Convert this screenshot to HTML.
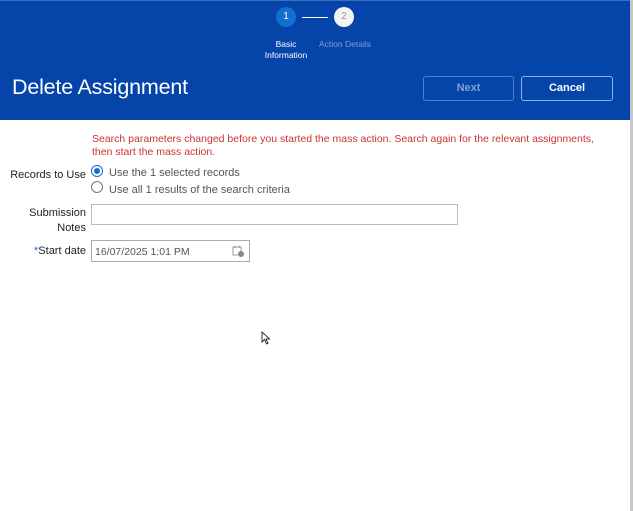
<!DOCTYPE html>
<html><head><style>
*{margin:0;padding:0;box-sizing:border-box}
body{width:633px;height:511px;background:#fff;font-family:"Liberation Sans",sans-serif;position:relative;overflow:hidden}
.hdr{position:absolute;left:0;top:0;width:630px;height:120px;background:#0545aa;border-top:1px solid #3a6fc2}
.strip{position:absolute;left:630px;top:0;width:3px;height:511px;background:#c8c8c8}
.c{position:absolute;width:20px;height:20px;border-radius:50%;font-size:10px;text-align:center;line-height:20px}
.t{position:absolute;color:#fff;font-size:8.5px;text-align:center;line-height:11px}
.btn{position:absolute;top:75px;height:25px;border:1px solid #8fb0e6;border-radius:3px;font-size:11px;font-weight:bold;text-align:center;line-height:23px}
.lbl{position:absolute;font-size:11px;color:#222;text-align:right}
.radio{position:absolute;width:12px;height:12px;border:1px solid #777;border-radius:50%;background:#fff}
.rt{position:absolute;font-size:11px;color:#555}
</style></head><body>
<div class="hdr">
<div class="c" style="left:276px;top:6px;background:#1170cf;color:#fff">1</div>
<div style="position:absolute;left:302px;top:16px;width:26px;height:1px;background:#fff"></div>
<div class="c" style="left:334px;top:6px;background:#f4f4f4;color:#999">2</div>
<div class="t" style="left:256px;top:38px;width:60px">Basic<br>Information</div>
<div class="t" style="left:310px;top:38px;width:70px;color:#7d9fd6">Action Details</div>
<div style="position:absolute;left:12px;top:74px;color:#fff;font-size:21.5px;letter-spacing:-0.2px">Delete Assignment</div>
<div class="btn" style="left:423px;width:91px;color:#7d9fd6;border-color:#4d7fcf">Next</div>
<div class="btn" style="left:521px;width:92px;color:#fff">Cancel</div>
</div>
<div class="strip"></div>
<div style="position:absolute;left:92px;top:133px;color:#d0312d;font-size:10.5px;line-height:13px;width:518px">Search parameters changed before you started the mass action. Search again for the relevant assignments, then start the mass action.</div>
<div class="lbl" style="left:0;width:86px;top:169px">Records to Use</div>
<div class="radio" style="left:91px;top:165px;border-color:#1170cf"><div style="position:absolute;left:2px;top:2px;width:6px;height:6px;border-radius:50%;background:#1170cf"></div></div>
<div class="rt" style="left:109px;top:167px">Use the 1 selected records</div>
<div class="radio" style="left:91px;top:181px"></div>
<div class="rt" style="left:109px;top:184px">Use all 1 results of the search criteria</div>
<div class="lbl" style="left:0;width:86px;top:206px;line-height:15px">Submission<br>Notes</div>
<div style="position:absolute;left:91px;top:204px;width:367px;height:21px;border:1px solid #a9c2c6"></div>
<div class="lbl" style="left:0;width:86px;top:245px"><span style="color:#1170cf">*</span>Start date</div>
<div style="position:absolute;left:91px;top:240px;width:159px;height:22px;border:1px solid #aaa;font-size:10.5px;color:#555;padding:5px 0 0 3px">16/07/2025 1:01 PM
<svg style="position:absolute;right:5px;top:4px" width="12" height="12" viewBox="0 0 12 12"><rect x="1" y="2" width="8" height="8" fill="none" stroke="#999"/><line x1="3" y1="0.5" x2="3" y2="3" stroke="#999"/><line x1="7" y1="0.5" x2="7" y2="3" stroke="#999"/><circle cx="9" cy="9" r="3" fill="#888"/></svg></div>
<svg style="position:absolute;left:261px;top:331px" width="10" height="14" viewBox="0 0 10 14"><path d="M1 1 L1 11 L3.5 8.5 L5.5 13 L7 12.3 L5 8 L8.5 8 Z" fill="#fff" stroke="#000" stroke-width="0.8"/></svg>
</body></html>
